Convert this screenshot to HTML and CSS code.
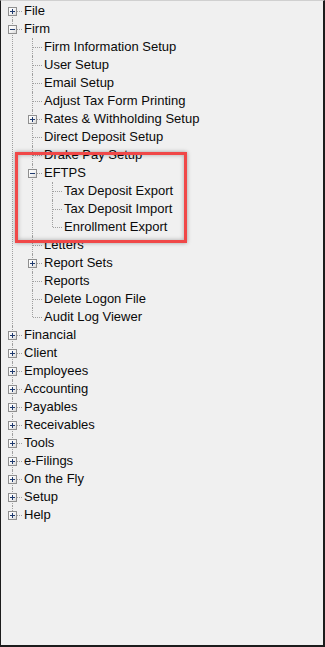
FILE: index.html
```html
<!DOCTYPE html>
<html lang="en">
<head>
    <meta charset="UTF-8">
    <title>Menu Tree</title>
    <link rel="stylesheet" href="styles.css">
</head>
<body>
    <div class="panel">
        <ul class="tree root">
            <li><span class="row"><i class="box plus"></i>File</span></li>
            <li class="open"><span class="row"><i class="box minus"></i>Firm</span>
                <ul class="tree">
                    <li><span class="row leaf">Firm Information Setup</span></li>
                    <li><span class="row leaf">User Setup</span></li>
                    <li><span class="row leaf">Email Setup</span></li>
                    <li><span class="row leaf">Adjust Tax Form Printing</span></li>
                    <li><span class="row"><i class="box plus"></i>Rates &amp; Withholding Setup</span></li>
                    <li><span class="row leaf">Direct Deposit Setup</span></li>
                    <li><span class="row leaf">Drake Pay Setup</span></li>
                    <li class="open"><span class="row"><i class="box minus"></i>EFTPS</span>
                        <ul class="tree">
                            <li><span class="row leaf">Tax Deposit Export</span></li>
                            <li><span class="row leaf">Tax Deposit Import</span></li>
                            <li><span class="row leaf">Enrollment Export</span></li>
                        </ul>
                    </li>
                    <li><span class="row leaf">Letters</span></li>
                    <li><span class="row"><i class="box plus"></i>Report Sets</span></li>
                    <li><span class="row leaf">Reports</span></li>
                    <li><span class="row leaf">Delete Logon File</span></li>
                    <li><span class="row leaf">Audit Log Viewer</span></li>
                </ul>
            </li>
            <li><span class="row"><i class="box plus"></i>Financial</span></li>
            <li><span class="row"><i class="box plus"></i>Client</span></li>
            <li><span class="row"><i class="box plus"></i>Employees</span></li>
            <li><span class="row"><i class="box plus"></i>Accounting</span></li>
            <li><span class="row"><i class="box plus"></i>Payables</span></li>
            <li><span class="row"><i class="box plus"></i>Receivables</span></li>
            <li><span class="row"><i class="box plus"></i>Tools</span></li>
            <li><span class="row"><i class="box plus"></i>e-Filings</span></li>
            <li><span class="row"><i class="box plus"></i>On the Fly</span></li>
            <li><span class="row"><i class="box plus"></i>Setup</span></li>
            <li><span class="row"><i class="box plus"></i>Help</span></li>
        </ul>
        <div class="highlight"></div>
    </div>
</body>
</html>
```

FILE: styles.css
```css
body {
    margin: 0;
    padding: 0;
    background: #f0f0f0;
    font-family: "Liberation Sans", Arial, sans-serif;
}

.panel {
    position: relative;
    box-sizing: border-box;
    width: 325px;
    height: 647px;
    background: #f0f0f0;
    border-left: 1px solid #1c1c1c;
    border-top: 1px solid #d0d0d0;
    border-right: 2px solid #1c1c1c;
    border-bottom: 2px solid #1c1c1c;
}

.tree {
    list-style: none;
    margin: 0;
    padding: 0;
}

.root {
    padding-left: 11px;
    padding-top: 1px;
}

.tree .tree {
    margin-left: 8px;
}

.tree li {
    position: relative;
    padding-left: 12px;
}

/* vertical connector */
.tree li::before {
    content: '';
    position: absolute;
    left: 0;
    top: 0;
    bottom: 0;
    border-left: 1px dotted #a0a0a0;
}

.root > li:first-child::before {
    top: 9px;
}

.tree li:last-child::before {
    bottom: auto;
    height: 9px;
}

.row {
    display: block;
    height: 18px;
    line-height: 18px;
    font-size: 13px;
    color: #0a0a0a;
    white-space: nowrap;
}

/* horizontal connector */
.row::before {
    content: '';
    position: absolute;
    left: 1px;
    top: 9px;
    width: 9px;
    border-top: 1px dotted #a0a0a0;
}

.box {
    position: absolute;
    left: -4px;
    top: 5px;
    width: 7px;
    height: 7px;
    border: 1px solid #8f8f8f;
    background: linear-gradient(135deg, #ffffff 0%, #f4f4f4 50%, #d8d8d8 100%);
    z-index: 1;
}

.box::before,
.box::after {
    content: '';
    position: absolute;
    background: #1e3a6e;
}

.box::before {
    left: 1px;
    top: 3px;
    width: 5px;
    height: 1px;
}

.plus::after {
    left: 3px;
    top: 1px;
    width: 1px;
    height: 5px;
}

.highlight {
    position: absolute;
    left: 14px;
    top: 151px;
    width: 166px;
    height: 85px;
    border: 3px solid #f04848;
    box-shadow: 0 0 4px rgba(0, 0, 0, 0.35), inset 0 0 4px rgba(0, 0, 0, 0.3);
    pointer-events: none;
}
```
